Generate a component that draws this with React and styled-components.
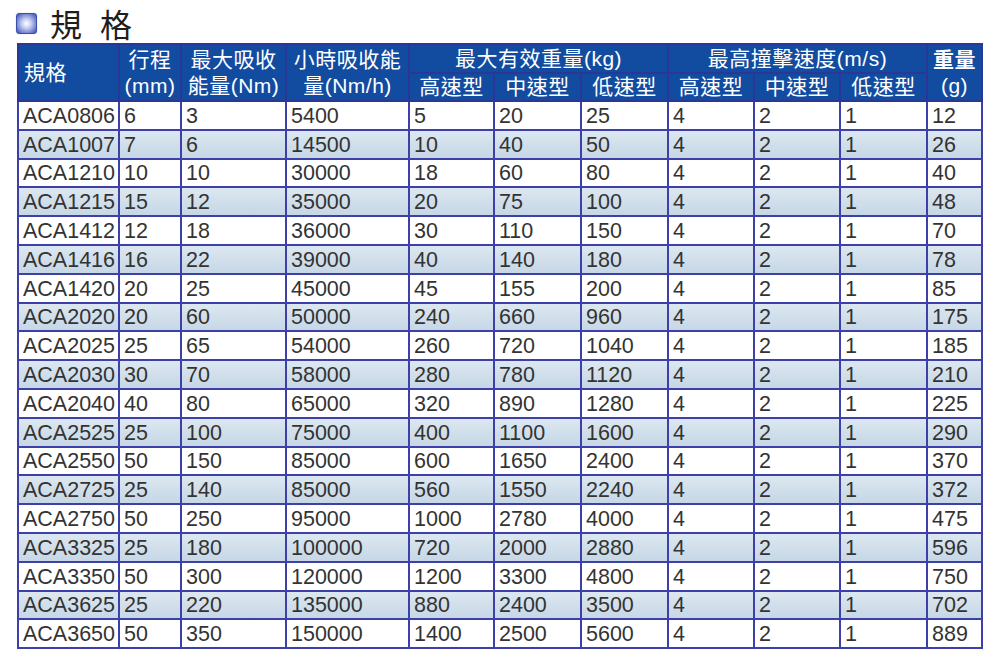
import React from 'react';
import styled, { createGlobalStyle } from 'styled-components';

const GlobalStyle = createGlobalStyle`
  html, body {
    margin: 0;
    padding: 0;
    background: #ffffff;
  }
  body {
    font-family: "Liberation Sans", Arial, "Noto Sans CJK TC", sans-serif;
  }
`;

const Page = styled.div`
  width: 1000px;
  height: 655px;
  padding: 6px 0 0 17px;
  box-sizing: border-box;
`;

const TitleRow = styled.div`
  display: flex;
  align-items: center;
  gap: 13px;
  height: 34px;
  margin-bottom: 3px;
`;

const TitleIcon = styled.div`
  width: 19px;
  height: 19px;
  margin-left: -1px;
  border-radius: 3px;
  border: 1px solid #3e4fa8;
  background: radial-gradient(circle, #ffffff 0%, #c6cdf0 35%, #6d7fd0 75%, #3848a6 100%);
  box-shadow: 0 0 1px rgba(40, 50, 140, 0.5);
`;

const TitleText = styled.h1`
  margin: 0;
  font-family: "Noto Sans CJK TC", "Noto Sans CJK SC", sans-serif;
  font-size: 32px;
  font-weight: 400;
  color: #1e1e1e;
  letter-spacing: 18px;
  line-height: 34px;
`;

const Table = styled.table`
  border-collapse: collapse;
  table-layout: fixed;
  width: 964px;
  border: 2px solid #3a3fa4;
`;

const Th = styled.th`
  background: #124ca1;
  color: #ffffff;
  font-family: "Liberation Sans", Arial, "Noto Sans CJK TC", sans-serif;
  font-size: 21px;
  font-weight: ${(p) => (p.$bold ? 700 : 400)};
  line-height: 26px;
  letter-spacing: 0.5px;
  text-align: ${(p) => (p.$left ? 'left' : 'center')};
  padding: ${(p) => (p.$left ? '0 0 0 5px' : '0')};
  border: 2px solid #2a3796;
  height: ${(p) => (p.$h ? `${p.$h}px` : 'auto')};
  white-space: nowrap;
  overflow: hidden;
`;

const Tr = styled.tr`
  height: 28.8px;
  background: ${(p) =>
    p.$striped ? 'linear-gradient(180deg, #dde8f1 0%, #c5d6e5 100%)' : '#ffffff'};
`;

const Td = styled.td`
  font-size: 21.5px;
  color: #333333;
  line-height: 24px;
  padding: 1px 0 0 4px;
  border: 2px solid #3c40a8;
  white-space: nowrap;
  overflow: hidden;
`;

const widths = [101, 62, 105, 123, 85, 87, 87, 86, 86, 87, 55];

const rows = [
  ['ACA0806', 6, 3, 5400, 5, 20, 25, 4, 2, 1, 12],
  ['ACA1007', 7, 6, 14500, 10, 40, 50, 4, 2, 1, 26],
  ['ACA1210', 10, 10, 30000, 18, 60, 80, 4, 2, 1, 40],
  ['ACA1215', 15, 12, 35000, 20, 75, 100, 4, 2, 1, 48],
  ['ACA1412', 12, 18, 36000, 30, 110, 150, 4, 2, 1, 70],
  ['ACA1416', 16, 22, 39000, 40, 140, 180, 4, 2, 1, 78],
  ['ACA1420', 20, 25, 45000, 45, 155, 200, 4, 2, 1, 85],
  ['ACA2020', 20, 60, 50000, 240, 660, 960, 4, 2, 1, 175],
  ['ACA2025', 25, 65, 54000, 260, 720, 1040, 4, 2, 1, 185],
  ['ACA2030', 30, 70, 58000, 280, 780, 1120, 4, 2, 1, 210],
  ['ACA2040', 40, 80, 65000, 320, 890, 1280, 4, 2, 1, 225],
  ['ACA2525', 25, 100, 75000, 400, 1100, 1600, 4, 2, 1, 290],
  ['ACA2550', 50, 150, 85000, 600, 1650, 2400, 4, 2, 1, 370],
  ['ACA2725', 25, 140, 85000, 560, 1550, 2240, 4, 2, 1, 372],
  ['ACA2750', 50, 250, 95000, 1000, 2780, 4000, 4, 2, 1, 475],
  ['ACA3325', 25, 180, 100000, 720, 2000, 2880, 4, 2, 1, 596],
  ['ACA3350', 50, 300, 120000, 1200, 3300, 4800, 4, 2, 1, 750],
  ['ACA3625', 25, 220, 135000, 880, 2400, 3500, 4, 2, 1, 702],
  ['ACA3650', 50, 350, 150000, 1400, 2500, 5600, 4, 2, 1, 889],
];

export default function App() {
  return (
    <Page>
      <GlobalStyle />
      <TitleRow>
        <TitleIcon />
        <TitleText>規格</TitleText>
      </TitleRow>
      <Table>
        <colgroup>
          {widths.map((w, i) => (
            <col key={i} style={{ width: w }} />
          ))}
        </colgroup>
        <thead>
          <tr>
            <Th rowSpan={2} $left>規格</Th>
            <Th rowSpan={2}>行程<br />(mm)</Th>
            <Th rowSpan={2}>最大吸收<br />能量(Nm)</Th>
            <Th rowSpan={2}>小時吸收能<br />量(Nm/h)</Th>
            <Th colSpan={3} $h={27}>最大有效重量(kg)</Th>
            <Th colSpan={3}>最高撞擊速度(m/s)</Th>
            <Th rowSpan={2} $bold>重量<br /><span style={{ fontWeight: 400 }}>(g)</span></Th>
          </tr>
          <tr>
            <Th $h={25}>高速型</Th>
            <Th>中速型</Th>
            <Th>低速型</Th>
            <Th>高速型</Th>
            <Th>中速型</Th>
            <Th>低速型</Th>
          </tr>
        </thead>
        <tbody>
          {rows.map((r, i) => (
            <Tr key={r[0]} $striped={i % 2 === 1}>
              {r.map((v, j) => (
                <Td key={j}>{v}</Td>
              ))}
            </Tr>
          ))}
        </tbody>
      </Table>
    </Page>
  );
}
